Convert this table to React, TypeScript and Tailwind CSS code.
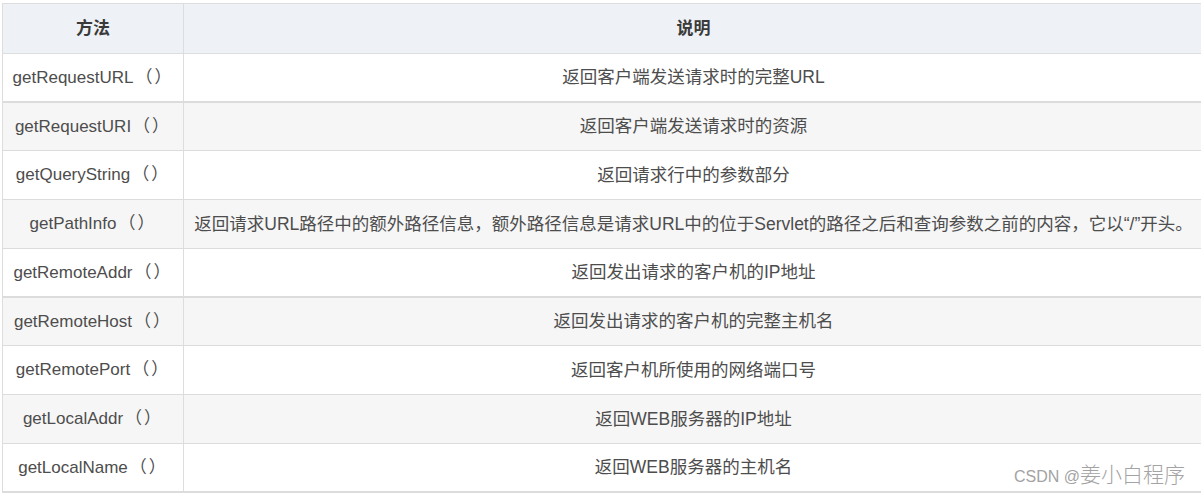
import React from 'react';

type Row = {
  method: string;
  desc: string;
  h: string;
};

const rows: Row[] = [
  { method: 'getRequestURL', desc: '返回客户端发送请求时的完整URL', h: 'h-[49px] border-b-2' },
  { method: 'getRequestURI', desc: '返回客户端发送请求时的资源', h: 'h-[48px] border-b' },
  { method: 'getQueryString', desc: '返回请求行中的参数部分', h: 'h-[49px] border-b' },
  {
    method: 'getPathInfo',
    desc: '返回请求URL路径中的额外路径信息，额外路径信息是请求URL中的位于Servlet的路径之后和查询参数之前的内容，它以“/”开头。',
    h: 'h-[49px] border-b',
  },
  { method: 'getRemoteAddr', desc: '返回发出请求的客户机的IP地址', h: 'h-[49px] border-b-2' },
  { method: 'getRemoteHost', desc: '返回发出请求的客户机的完整主机名', h: 'h-[48px] border-b' },
  { method: 'getRemotePort', desc: '返回客户机所使用的网络端口号', h: 'h-[49px] border-b' },
  { method: 'getLocalAddr', desc: '返回WEB服务器的IP地址', h: 'h-[49px] border-b' },
  { method: 'getLocalName', desc: '返回WEB服务器的主机名', h: 'h-[49px] border-b-2' },
];

const font = "font-['Liberation_Sans','Noto_Sans_CJK_SC',sans-serif]";

const App: React.FC = () => {
  return (
    <div className={`relative w-[1201px] h-[493px] overflow-hidden bg-white ${font}`}>
      <div className="ml-[2px] mt-[3px] w-[1201px] border-t border-l border-[#dddddd]">
        {/* Header */}
        <div className="flex h-[50px] border-b border-[#dddddd] bg-[#eef1f5] text-[#3a3a3a] font-bold text-[17px]">
          <div className="w-[181px] shrink-0 flex items-center justify-center border-r border-[#dddddd]">
            方法
          </div>
          <div className="flex-1 flex items-center justify-center">说明</div>
        </div>

        {/* Rows */}
        {rows.map((r, i) => (
          <div
            key={r.method}
            className={`flex box-border border-[#dcdcdc] text-[#4d4d4d] ${r.h} ${
              i % 2 === 1 ? 'bg-[#f6f6f6]' : 'bg-white'
            }`}
          >
            <div className="w-[181px] shrink-0 flex items-center justify-center border-r border-[#dddddd] text-[17px] pr-[2px] whitespace-nowrap">
              {r.method}
              <span className="ml-[2px]">（</span>
              <span className="ml-[2px]">）</span>
            </div>
            <div className="flex-1 flex items-center justify-center text-[17.5px] whitespace-nowrap">
              {r.desc}
            </div>
          </div>
        ))}
      </div>

      {/* watermark */}
      <div className="absolute left-[1014px] top-[458px] flex items-baseline text-[#a3a3a3] whitespace-nowrap">
        <span className="text-[16px]">CSDN @</span>
        <span className="text-[21px] font-light font-['Noto_Sans_CJK_SC',sans-serif]">姜小白程序</span>
      </div>
    </div>
  );
};

export default App;
